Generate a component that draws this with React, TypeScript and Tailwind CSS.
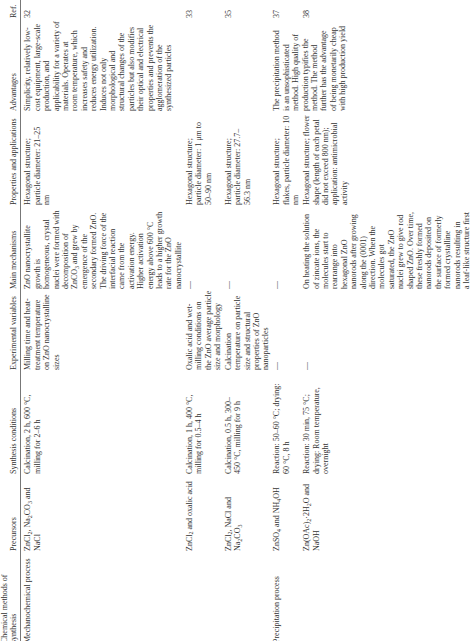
import React from "react";

type Line = React.ReactNode;

function C({ lines, span = "" }: { lines: Line[]; span?: string }) {
  return (
    <div className={"pt-[1.5px] " + span}>
      {lines.map((l, i) => (
        <div key={i} className="whitespace-nowrap">
          {l}
        </div>
      ))}
    </div>
  );
}

function H({ children }: { children: React.ReactNode }) {
  return <div className="self-end whitespace-nowrap pb-px">{children}</div>;
}

export default function App() {
  return (
    <div className="w-[474px] h-[641px] overflow-hidden bg-white">
      <div className="w-[641px] h-[474px] origin-top-left -rotate-90 translate-y-[641px]">
        <div className="grid grid-cols-[92px_77px_104px_81px_84px_94px_93px_30px] ml-[2px] mt-[4px] text-[8px] leading-[9.4px] text-[#333] font-['Liberation_Serif',serif]">
          {/* header */}
          <div className="self-end pb-px">
            <div className="whitespace-nowrap">Chemical methods of</div>
            <div className="whitespace-nowrap">synthesis</div>
          </div>
          <H>Precursors</H>
          <H>Synthesis conditions</H>
          <H>Experimental variables</H>
          <H>Main mechanisms</H>
          <H>Properties and applications</H>
          <H>Advantages</H>
          <H>Ref.</H>
          <div className="col-span-8 h-px bg-[#777] mb-px" />

          {/* row 32 */}
          <C span="row-span-3" lines={["Mechanochemical process"]} />
          <C
            lines={[
              <>
                ZnCl<sub>2</sub>, Na<sub>2</sub>CO<sub>3</sub> and
              </>,
              "NaCl",
            ]}
          />
          <C lines={["Calcination, 2 h, 600 °C,", "milling for 2–6 h"]} />
          <C lines={["Milling time and heat-", "treatment temperature", "on ZnO nanocrystalline", "sizes"]} />
          <C
            lines={[
              "ZnO nanocrystallite",
              "growth is",
              "homogeneous, crystal",
              "nuclei were formed with",
              "decomposition of",
              <>
                ZnCO<sub>3</sub> and grew by
              </>,
              "emergence of the",
              "secondary formed ZnO.",
              "The driving force of the",
              "interfacial reaction",
              "came from the",
              "activation energy.",
              "Higher activation",
              "energy above 600 °C",
              "leads to a higher growth",
              "rate for the ZnO",
              "nanocrystallite",
            ]}
          />
          <C lines={["Hexagonal structure;", "particle diameter: 21–25", "nm"]} />
          <C
            lines={[
              "Simplicity, relatively low-",
              "cost equipment, large-scale",
              "production, and",
              "applicability for a variety of",
              "materials. Operates at",
              "room temperature, which",
              "increases safety and",
              "reduces energy utilization.",
              "Induces not only",
              "morphological and",
              "structural changes of the",
              "particles but also modifies",
              "their optical and electrical",
              "properties and prevents the",
              "agglomeration of the",
              "synthesized particles",
            ]}
          />
          <C lines={["32"]} />

          {/* row 33 */}
          <C
            lines={[
              <>
                ZnCl<sub>2</sub> and oxalic acid
              </>,
            ]}
          />
          <C lines={["Calcination, 1 h, 400 °C,", "milling for 0.5–4 h"]} />
          <C lines={["Oxalic acid and wet-", "milling conditions on", "the ZnO average particle", "size and morphology"]} />
          <C lines={["—"]} />
          <C lines={["Hexagonal structure;", "particle diameter: 1 μm to", "50–90 nm"]} />
          <C lines={[]} />
          <C lines={["33"]} />

          {/* row 35 */}
          <C
            lines={[
              <>
                ZnCl<sub>2</sub>, NaCl and
              </>,
              <>
                Na<sub>2</sub>CO<sub>3</sub>
              </>,
            ]}
          />
          <C lines={["Calcination, 0.5 h, 300–", "450 °C, milling for 9 h"]} />
          <C
            lines={["Calcination", "temperature on particle", "size and structural", "properties of ZnO", "nanoparticles"]}
          />
          <C lines={["—"]} />
          <C lines={["Hexagonal structure;", "particle diameter: 27.7–", "56.3 nm"]} />
          <C lines={[]} />
          <C lines={["35"]} />

          {/* row 37 */}
          <C span="row-span-2" lines={["Precipitation process"]} />
          <C
            lines={[
              <>
                ZnSO<sub>4</sub> and NH<sub>4</sub>OH
              </>,
            ]}
          />
          <C lines={["Reaction: 50–60 °C; drying:", "60 °C, 8 h"]} />
          <C lines={["—"]} />
          <C lines={["—"]} />
          <C lines={["Hexagonal structure;", "flakes, particle diameter: 10", "nm"]} />
          <C
            span="row-span-2"
            lines={[
              "The precipitation method",
              "is an unsophisticated",
              "method. High quality of",
              "production typifies the",
              "method. The method",
              "further has the advantage",
              "of being monetarily cheap",
              "with high production yield",
            ]}
          />
          <C lines={["37"]} />

          {/* row 38 */}
          <C
            lines={[
              <>
                Zn(OAc)<sub>2</sub>·2H<sub>2</sub>O and
              </>,
              "NaOH",
            ]}
          />
          <C lines={["Reaction: 30 min, 75 °C;", "drying: Room temperature,", "overnight"]} />
          <C lines={["—"]} />
          <C
            lines={[
              "On heating the solution",
              "of zincate ions, the",
              "molecules start to",
              "rearrange into",
              "hexagonal ZnO",
              "nanorods after growing",
              "along the (0001)",
              "direction. When the",
              "molecules got",
              "saturated, the ZnO",
              "nuclei grew to give rod",
              "shaped ZnO. Over time,",
              "these freshly formed",
              "nanorods deposited on",
              "the surface of formerly",
              "formed crystalline",
              "nanorods resulting in",
              "a leaf-like structure first",
            ]}
          />
          <C
            lines={[
              "Hexagonal structure; flower",
              "shape (length of each petal",
              "did not exceed 800 nm);",
              "application: antimicrobial",
              "activity",
            ]}
          />
          <C lines={["38"]} />
        </div>
      </div>
    </div>
  );
}
